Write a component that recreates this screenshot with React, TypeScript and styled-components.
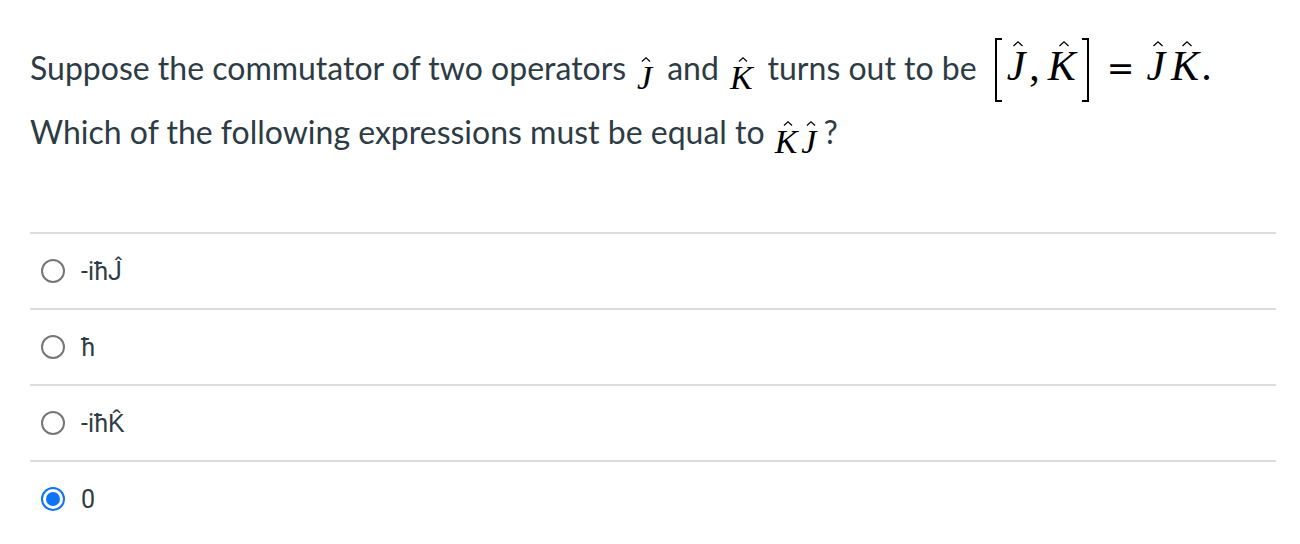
import React from 'react';
import styled, {createGlobalStyle} from 'styled-components';

const Global = createGlobalStyle`
  body {
    margin: 0;
    background: #fff;
  }
`;

const Page = styled.div`
  padding: 36px 24px 0 30px;
  font-family: Lato, "Open Sans", sans-serif;
  color: #2d3b45;
`;

const Question = styled.div`
  font-size: 32px;
  line-height: 64px;
  margin-bottom: 69px;
`;

const Line = styled.p`
  margin: 0;
  height: 64px;
  white-space: nowrap;
`;

// small inline math, sits a bit below the text baseline
const Math = styled.span`
  font-family: "Liberation Serif", "DejaVu Serif", serif;
  font-style: italic;
  font-size: 34px;
  color: #000;
  display: inline-block;
  line-height: 1;
  margin: 0 ${p => p.$right ?? 15}px 0 ${p => p.$left ?? 11}px;
  position: relative;
  top: 9px;
`;

const HatBox = styled.span`
  position: relative;
  display: inline-block;
`;

const HatMark = styled.svg`
  position: absolute;
  left: ${p => p.$left}%;
  top: ${p => p.$top}px;
  transform: translateX(-50%);
  overflow: visible;
`;

const Display = styled.span`
  margin-left: 18px;
  color: #000;
  font-family: "Liberation Serif", "DejaVu Serif", serif;
  font-style: italic;
  font-size: 42px;
  line-height: 1;
`;

const Bracket = styled.span`
  box-sizing: border-box;
  display: inline-block;
  width: 7px;
  height: 64px;
  vertical-align: -22px;
  border: 2px solid #000;
  border-${p => (p.$side === 'left' ? 'right' : 'left')}: none;
  margin: ${p => (p.$side === 'left' ? '0 5px 0 0' : '0 0 0 6px')};
`;

const Punct = styled.span`
  font-style: normal;
  margin: 0 ${p => p.$right ?? 0}px 0 ${p => p.$left ?? 0}px;
`;

const Eq = styled.span`
  font-family: "DejaVu Sans", sans-serif;
  font-style: normal;
  font-size: 33px;
  margin: 0 12px 0 18px;
`;

const List = styled.div`
  border-top: 2px solid #dcdcdc;
  margin-top: -1px;
`;

const Row = styled.label`
  display: flex;
  align-items: center;
  height: 74px;
  border-bottom: ${p => (p.$last ? 'none' : '2px solid #dcdcdc')};
  font-family: Roboto, "Liberation Sans", sans-serif;
  font-size: 25px;
  color: #2d3b45;
  padding-left: 11px;
`;

const Radio = styled.span`
  box-sizing: border-box;
  width: 24px;
  height: 24px;
  border-radius: 50%;
  border: 2px solid ${p => (p.$on ? '#0e73f6' : '#767676')};
  margin-right: 16px;
  display: flex;
  align-items: center;
  justify-content: center;
  &::after {
    content: '';
    display: ${p => (p.$on ? 'block' : 'none')};
    width: 14px;
    height: 14px;
    border-radius: 50%;
    background: #0e73f6;
  }
`;

const Hat: React.FC<{c: string; left?: number; w?: number; top?: number}> = ({c, left = 55, w = 10, top = -4}) => (
  <HatBox>
    {c}
    <HatMark $left={left} $top={top} width={w} height={w * 0.55} viewBox="0 0 10 5.5">
      <polyline points="0.5,5 5,0.8 9.5,5" fill="none" stroke="#000" strokeWidth="1.3" />
    </HatMark>
  </HatBox>
);

const answers = ['-iħĴ', 'ħ', '-iħK̂', '0'];

const App: React.FC = () => (
  <Page>
    <Global />
    <Question>
      <Line>
        Suppose the commutator of two operators
        <Math><Hat c="J" left={62} w={9} top={-4} /></Math>
        and
        <Math><Hat c="K" left={58} w={9} top={-4} /></Math>
        turns out to be
        <Display>
          <Bracket $side="left" />
          <Hat c="J" left={62} />
          <Punct $left={4} $right={8}>,</Punct>
          <Hat c="K" left={58} />
          <Bracket $side="right" />
          <Eq>=</Eq>
          <Hat c="J" left={62} />
          <Punct $left={6}></Punct>
          <Hat c="K" left={58} />
          <Punct $left={2}>.</Punct>
        </Display>
      </Line>
      <Line>
        Which of the following expressions must be equal to
        <Math $left={10} $right={7}>
          <Hat c="K" left={58} w={9} top={-4} />
          <Punct $left={4}></Punct>
          <Hat c="J" left={62} w={9} top={-4} />
        </Math>
        ?
      </Line>
    </Question>
    <List>
      {answers.map((a, i) => (
        <Row key={a} $last={i === answers.length - 1}>
          <Radio $on={i === 3} />
          {a}
        </Row>
      ))}
    </List>
  </Page>
);

export default App;
